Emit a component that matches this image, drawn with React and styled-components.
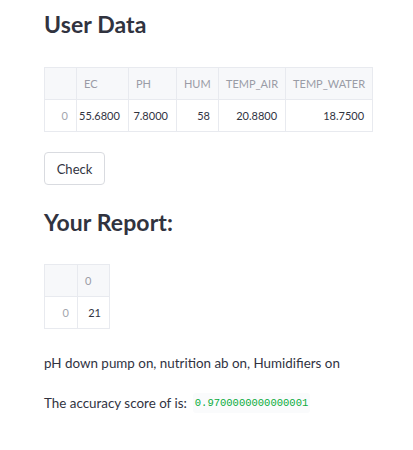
import React from "react";
import styled, { createGlobalStyle } from "styled-components";

const Global = createGlobalStyle`
  html, body { margin: 0; padding: 0; background: #fff; }
  body { font-family: Lato, "Open Sans", sans-serif; color: rgb(49, 51, 63); }
`;

const Page = styled.div`
  width: 413px;
  height: 450px;
  box-sizing: border-box;
  padding: 8px 0 0 44px;
  display: flex;
  flex-direction: column;
  align-items: flex-start;
`;

const Title = styled.h2`
  margin: ${(p) => p.$mt || 0}px 0 0 0;
  font-size: 23px;
  font-weight: 700;
  line-height: 32px;
  color: rgb(49, 51, 63);
  letter-spacing: 0.1px;
`;

const Table = styled.table`
  border-collapse: collapse;
  margin-top: ${(p) => p.$mt || 0}px;
  font-size: 11px;
  table-layout: fixed;
`;

const Th = styled.th`
  height: 32px;
  padding: 0 7px;
  border: 1px solid #e8eaef;
  background: #f7f8fa;
  color: #9a9ca6;
  font-weight: 400;
  text-align: left;
  box-sizing: border-box;
`;

const Td = styled.td`
  height: 32px;
  padding: 0 8px 0 2px;
  border: 1px solid #e8eaef;
  color: ${(p) => (p.$index ? "#a3a5ad" : "rgb(49, 51, 63)")};
  text-align: right;
  white-space: nowrap;
  overflow: hidden;
  box-sizing: border-box;
`;

const Button = styled.button`
  margin-top: 20px;
  width: 61px;
  height: 33px;
  border: 1px solid #d9dbe0;
  border-radius: 4px;
  background: #fff;
  font-family: Lato, "Open Sans", sans-serif;
  font-size: 13px;
  color: rgb(49, 51, 63);
  padding: 0;
`;

const Text = styled.p`
  margin: ${(p) => p.$mt || 0}px 0 0 0;
  font-size: 13.4px;
  line-height: 18px;
  color: rgb(49, 51, 63);
  display: flex;
  align-items: center;
  gap: 6px;
`;

const Code = styled.code`
  font-family: "Liberation Mono", "DejaVu Sans Mono", monospace;
  font-size: 10.5px;
  color: rgb(9, 171, 59);
  background: #fafbfc;
  padding: 1px 2px;
  border-radius: 3px;
`;

const cols = [
  { name: "", w: 32 },
  { name: "EC", w: 51 },
  { name: "PH", w: 48 },
  { name: "HUM", w: 42 },
  { name: "TEMP_AIR", w: 66 },
  { name: "TEMP_WATER", w: 86 },
];
const row = ["0", "55.6800", "7.8000", "58", "20.8800", "18.7500"];

export default function App() {
  return (
    <>
      <Global />
      <Page>
        <Title>User Data</Title>
        <Table $mt={27}>
          <colgroup>
            {cols.map((c, i) => (
              <col key={i} style={{ width: c.w }} />
            ))}
          </colgroup>
          <thead>
            <tr>
              {cols.map((c, i) => (
                <Th key={i}>{c.name}</Th>
              ))}
            </tr>
          </thead>
          <tbody>
            <tr>
              {row.map((v, i) => (
                <Td key={i} $index={i === 0}>
                  {v}
                </Td>
              ))}
            </tr>
          </tbody>
        </Table>
        <Button>Check</Button>
        <Title $mt={21}>Your Report:</Title>
        <Table $mt={26}>
          <colgroup>
            <col style={{ width: 33 }} />
            <col style={{ width: 32 }} />
          </colgroup>
          <thead>
            <tr>
              <Th />
              <Th>0</Th>
            </tr>
          </thead>
          <tbody>
            <tr>
              <Td $index>0</Td>
              <Td>21</Td>
            </tr>
          </tbody>
        </Table>
        <Text $mt={25}>pH down pump on, nutrition ab on, Humidifiers on</Text>
        <Text $mt={21}>
          The accuracy score of is: <Code>0.9700000000000001</Code>
        </Text>
      </Page>
    </>
  );
}
